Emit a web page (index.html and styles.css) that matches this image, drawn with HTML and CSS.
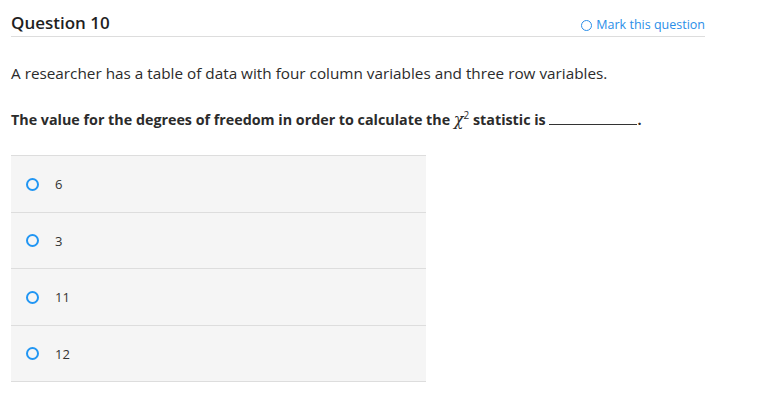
FILE: index.html
```html
<!DOCTYPE html>
<html>
<head>
<meta charset="utf-8">
<link rel="stylesheet" href="styles.css">
</head>
<body>
<div class="page">
  <div class="header">
    <h1 class="title">Question 10</h1>
    <a class="mark"><span class="mark-ring"></span>Mark this question</a>
  </div>
  <p class="prompt">A researcher has a table of data with four column variables and three row variables.</p>
  <p class="stem">The value for the degrees of freedom in order to calculate the <span class="chi"><i>χ</i><sup>2</sup></span> statistic is <span class="blank"></span>.</p>
  <div class="options">
    <label class="option"><span class="radio"></span><span class="opt-text">6</span></label>
    <label class="option"><span class="radio"></span><span class="opt-text">3</span></label>
    <label class="option"><span class="radio"></span><span class="opt-text">11</span></label>
    <label class="option"><span class="radio"></span><span class="opt-text">12</span></label>
  </div>
</div>
</body>
</html>
```
FILE: styles.css
```css
html, body {
  margin: 0;
  padding: 0;
  background: #fff;
}
body {
  font-family: "Open Sans", Lato, sans-serif;
  color: #222;
}
.page {
  padding: 12px 0 0 11px;
  width: 694px;
}
.header {
  display: flex;
  align-items: flex-end;
  justify-content: space-between;
  border-bottom: 1px solid #ddd;
  height: 24px;
}
.title {
  margin: 0;
  font-size: 17px;
  font-weight: 600;
  color: #1f1f1f;
  line-height: 20px;
  padding-bottom: 3px;
}
.mark {
  display: flex;
  align-items: center;
  gap: 4px;
  color: #2a8ee8;
  font-size: 12.5px;
  line-height: 16px;
  padding-bottom: 3px;
}
.mark-ring {
  width: 9px;
  height: 9px;
  border: 1.5px solid #2a8ee8;
  border-radius: 50%;
}
.prompt {
  margin: 26px 0 0;
  font-size: 15.3px;
  line-height: 20px;
  color: #2b2b2b;
}
.stem {
  margin: 22px 0 0;
  font-size: 14.3px;
  font-weight: 700;
  line-height: 20px;
  color: #2b2b2b;
}
.chi {
  font-family: "DejaVu Serif", serif;
  font-weight: 400;
  font-size: 16px;
}
.chi sup {
  font-size: 10px;
  font-family: "Open Sans", sans-serif;
}
.blank {
  display: inline-block;
  width: 88px;
  border-bottom: 1px solid #333;
}
.options {
  margin-top: 25px;
  width: 415px;
  border-top: 1px solid #ddd;
}
.option {
  display: flex;
  align-items: center;
  height: 55.5px;
  background: #f5f5f5;
  border-bottom: 1px solid #ddd;
  padding-left: 15px;
}
.radio {
  width: 9px;
  height: 9px;
  border: 2.5px solid #2196f3;
  border-radius: 50%;
  margin-right: 16px;
}
.opt-text {
  font-size: 13px;
  color: #333;
}
```
